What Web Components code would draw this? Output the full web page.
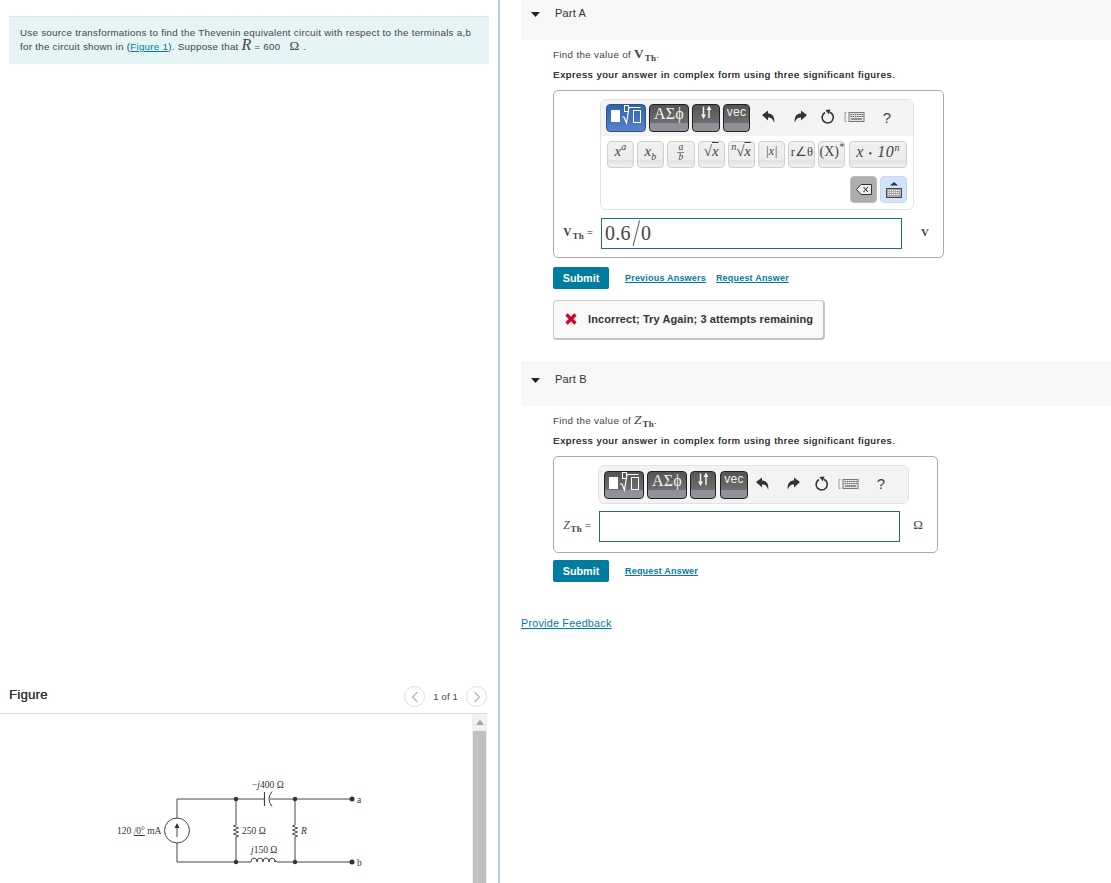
<!DOCTYPE html>
<html lang="en"><head><meta charset="utf-8"><title>Part A</title>
<style>
html,body{margin:0;padding:0;background:#fff}
body{font-family:"Liberation Sans",Arial,sans-serif;color:#333}
</style></head>
<body>
<mp-app></mp-app>
<script>
const SANS='"Liberation Sans",Arial,sans-serif', SERIF='"Liberation Serif","Times New Roman",serif';
function def(name,css,html){
  const C=class extends HTMLElement{
    constructor(){super();const s=this.attachShadow({mode:'open'});
      const h=typeof html==='function'?html(this):html;
      s.innerHTML='<style>'+css+'</style>'+h;}
  };
  customElements.define(name,C);
}
def('mp-math',`:host{display:inline;font-family:${SERIF};color:#444}
 .v{font-size:var(--mv,13.5px);font-weight:var(--mw,400);font-style:var(--ms,normal);letter-spacing:.8px}
 sub{font-size:9px;font-weight:700;font-style:normal;vertical-align:-3px;line-height:0;letter-spacing:.3px;margin-left:0}`,
 el=>`<span class="v"><slot></slot></span><sub>${el.getAttribute('sub')||''}</sub>`);

const ICON={
 undo:`<svg width="16" height="16" viewBox="0 0 16 16"><path d="M1 6 L7 1.500 V4.500 C11 4.500 14 7 13.200 14 C12 10 10.500 8.500 7 8.500 V11.500 Z" fill="#333"/></svg>`,
 redo:`<svg width="16" height="16" viewBox="0 0 16 16"><path d="M15 6 L9 1.500 V4.500 C5 4.500 2 7 2.800 14 C4 10 5.500 8.500 9 8.500 V11.500 Z" fill="#333"/></svg>`,
 reset:`<svg width="16" height="16" viewBox="0 0 16 16"><path d="M9.800 3.200 A5.600 5.600 0 1 1 5 3.500" fill="none" stroke="#333" stroke-width="1.600"/><path d="M10.500 .500 L5.300 1 L8.800 5.200Z" fill="#333"/></svg>`,
 kb:`<svg width="21" height="12" viewBox="0 0 21 12"><path d="M2.500 1.500 H1 V10.500 H2.500" fill="none" stroke="#999"/><rect x="5" y="1.500" width="15" height="9" fill="#e4e4e4" stroke="#777"/><path d="M6.500 3.500 H19 M6.500 5.500 H19" stroke="#666" stroke-dasharray="1.500 .7"/><path d="M7 8 H18" stroke="#444"/></svg>`,
 arrows:`<svg width="20" height="18" viewBox="0 0 20 18" style="display:block"><path d="M7.500 2.500 V13 M13 14 V3.500" stroke="#f2f2f2" stroke-width="1.500" fill="none"/><path d="M5 10.500 L7.500 15 L10 10.500Z M10.500 6 L13 1.500 L15.500 6Z" fill="#f2f2f2"/></svg>`
};
def('mp-tool-dark',`:host{display:flex;box-sizing:border-box;height:100%;border:1px solid #222;border-radius:4px;
  background:linear-gradient(#555 0,#6e6e6e 68%,#8f8f98 70%,#93939c 100%);color:#f2f2f2;
  font-family:${SERIF};font-size:16px;overflow:hidden;align-items:flex-start;justify-content:center}
 :host([active]){background:linear-gradient(#2f66ad 0,#4a76c0 65%,#5b83c8 100%);border-color:#2a5492}
 span{line-height:20px;white-space:nowrap;margin-top:-1px;letter-spacing:.2px}
 :host([sans]) span{font-family:${SANS};font-size:12px;line-height:17px}
 svg{display:block}`,
 `<span><slot></slot></span>`);
def('mp-tool-light',`:host{display:flex;box-sizing:border-box;height:27px;border:1px solid #cfcfcf;border-radius:4px;
  background:linear-gradient(#f0f0f0 0,#ececec 73%,#e2e2e2 74%,#f1f1f1 100%);justify-content:center;
  color:#444;font:italic 15px ${SERIF};overflow:hidden}
 .g{line-height:19px;white-space:nowrap;display:block}
 sup,sub{font-size:10px;line-height:0}
 .f{display:inline-flex;flex-direction:column;align-items:center;font-size:9.500px;line-height:9px;vertical-align:top;padding-top:1px}
 .f i{border-bottom:1px solid #888;padding:0 1px;display:block}
 .f b{font-weight:400;display:block}
 .o{text-decoration:overline;letter-spacing:0}
 .n{font-style:normal}`,
 el=>`<span class="g">${el.getAttribute('html')||''}</span>`);
const TEMPL=`<svg width="38" height="26" viewBox="0 0 38 26" style="display:block"><rect x="4" y="6" width="9" height="12" fill="#fff"/><rect x="17.500" y="1.500" width="4" height="6" fill="none" stroke="#fff"/><path d="M15 13 H17 L19.500 19 L22 3.500 H33.500" fill="none" stroke="#fff" stroke-width="1.200"/><rect x="26.500" y="6.500" width="7" height="12" fill="none" stroke="#fff"/></svg>`;

def('mp-palette',`:host{display:block;box-sizing:border-box;border:1px solid #e2e2e2;border-radius:6px;background:#fff;overflow:hidden;width:var(--pw,314px);margin-left:var(--pl,46px)}
 .top{display:flex;align-items:center;height:var(--th,36px);background:#f3f3f3;padding:0 0 0 5px;box-sizing:border-box}
 .bs{display:flex;height:28px;gap:3px}
 .ic{display:flex;align-items:center;justify-content:center;width:16px;height:16px;margin-top:-2px}
 .kb{width:21px}
 .q{font:15px ${SANS};color:#444;width:10px;text-align:center;margin-top:-2px}
 .rows{padding:5px 6px 0 6px;height:73px;box-sizing:border-box}
 .r{display:flex;gap:3px}
 .r mp-tool-light{width:27px}
 .r .exp{width:58px;margin-left:1px;font-size:16px;letter-spacing:.6px}
 .r2{display:flex;gap:3px;justify-content:flex-end;margin-top:8px;height:28px}
 .bk{width:27px;height:27px;border:1px solid #bdbdbd;box-sizing:border-box;border-radius:4px;background:#adadad;display:flex;align-items:center;justify-content:center}
 .kbd{width:27px;height:27px;border:1px solid #cbd8e6;box-sizing:border-box;border-radius:4px;background:#cfe3fb;display:flex;align-items:center;justify-content:center}`,
 el=>{
  const s=el.hasAttribute('expanded');
  const m=s?[11,15,12,8,17]:[7,14,13,8,17];
  return `<div class="top"><div class="bs">
    <mp-tool-dark ${s?'active':''} style="width:40px;height:28px">${TEMPL}</mp-tool-dark>
    <mp-tool-dark style="width:40px;height:28px">ΑΣϕ</mp-tool-dark>
    <mp-tool-dark style="width:${s?28:26}px;height:28px;${s?'':'margin-right:1px'}">${ICON.arrows}</mp-tool-dark>
    <mp-tool-dark sans style="width:${s?27:28}px;height:28px">vec</mp-tool-dark></div>
   <div class="ic" style="margin-left:${m[0]}px">${ICON.undo}</div>
   <div class="ic" style="margin-left:${m[1]}px">${ICON.redo}</div>
   <div class="ic" style="margin-left:${m[2]}px">${ICON.reset}</div>
   <div class="ic kb" style="margin-left:${m[3]}px">${ICON.kb}</div>
   <div class="q" style="margin-left:${m[4]}px">?</div></div>`+
  (s?`<div class="rows"><div class="r">
    <mp-tool-light html="x<sup>a</sup>"></mp-tool-light>
    <mp-tool-light html="x<sub>b</sub>"></mp-tool-light>
    <mp-tool-light style="width:28px" html="<span class='f'><i>a</i><b>b</b></span>"></mp-tool-light>
    <mp-tool-light html="√<span class='o'>x</span>"></mp-tool-light>
    <mp-tool-light html="<sup>n</sup>√<span class='o'>x</span>"></mp-tool-light>
    <mp-tool-light style="width:28px;font-size:12px" html="|x|"></mp-tool-light>
    <mp-tool-light html="<span class='n' style='font-size:12.500px'>r∠θ</span>"></mp-tool-light>
    <mp-tool-light html="<span class='n' style='font-size:14px'>(X)</span><sup>*</sup>"></mp-tool-light>
    <mp-tool-light class="exp" html="x <span class='n' style='font-size:10px'>•</span> 10<sup>n</sup>"></mp-tool-light>
   </div><div class="r2">
    <div class="bk"><svg width="16" height="11" viewBox="0 0 16 11"><path d="M5 .500 H15.500 V10.500 H5 L.500 5.500Z" fill="#eee" stroke="#333"/><path d="M7.500 3 L12 8 M12 3 L7.500 8" stroke="#222"/></svg></div>
    <div class="kbd"><svg width="16" height="17" viewBox="0 0 16 17"><path d="M8 1 L12 4.500 H4Z" fill="#333"/><rect x=".500" y="7.500" width="15" height="9" fill="#aaa" stroke="#444"/><path d="M2 9.500 H14.500 M2 11.500 H14.500 M2 13.500 H14.500" stroke="#eee" stroke-dasharray="1 1"/></svg></div>
   </div></div>`:'');
 });

def('mp-answer',`:host{display:block;box-sizing:border-box;border:1px solid #aaa;border-radius:5px;width:var(--bw,391px);padding:8px 0 0 0;height:var(--bh,169px);background:#fff}
 .row{display:flex;align-items:center;margin-top:var(--rg,8px)}
 .lab{width:var(--lw,47px);box-sizing:border-box;text-align:right;padding-right:8px;font:11px ${SERIF};color:#333;white-space:nowrap;margin-top:-4px}
 .inp{width:301px;height:31px;box-sizing:border-box;border:1px solid #167288;padding:0 0 0 3px;display:flex;align-items:center;background:#fff}
 .unit{margin-left:var(--um,18px);font:var(--uf,bold 11px) ${SERIF};color:#444;width:10px;text-align:center;margin-top:-4px}`,
 el=>`<slot name="palette"></slot><div class="row"><div class="lab"><slot name="label"></slot></div><div class="inp"><slot name="value"></slot></div><div class="unit">${el.getAttribute('unit')}</div></div>`);

def('mp-submit',`:host{display:inline-block;box-sizing:border-box;width:56px;height:22px;background:#007c9e;border-radius:2px;color:#fff;font:bold 10.800px/22px ${SANS};text-align:center}`,`<slot></slot>`);
def('mp-link',`:host{display:inline-block;color:#007c9e;font:bold 9px ${SANS};text-decoration:underline;letter-spacing:.2px}`,`<slot></slot>`);
def('mp-actions',`:host{display:flex;align-items:center;height:22px}
 .l{display:flex;gap:10px;margin-left:16px;margin-top:-1px}`,`<mp-submit>Submit</mp-submit><div class="l"><slot></slot></div>`);

def('mp-feedback',`:host{display:flex;align-items:center;box-sizing:border-box;width:272px;height:40px;background:#f9f9f9;border:1px solid #ccc;border-bottom:2px solid #c4c4c4;border-right:2px solid #c4c4c4;border-radius:4px;padding:0 0 2px 11px;font:bold 11px ${SANS};color:#333;letter-spacing:.1px}
 svg{margin-right:11px;flex:none}`,`<svg width="12" height="12" viewBox="0 0 12 12"><path d="M1.500 1.500 L10.500 10.500 M10.500 1.500 L1.500 10.500" stroke="#d8002c" stroke-width="3.200"/></svg><slot></slot>`);

def('mp-part-head',`:host{display:flex;align-items:flex-start;box-sizing:border-box;background:#f7f7f7;font:11px ${SANS};color:#333;height:var(--hh,40px);padding:var(--hp,7px) 0 0 10px;letter-spacing:.2px}
 svg{margin:5px 15px 0 0}`,`<svg width="9" height="5" viewBox="0 0 9 5"><path d="M0 0H9L4.500 5Z" fill="#222"/></svg><slot></slot>`);
def('mp-ask',`:host{display:block;margin-left:32px;font:9.800px ${SANS};color:#444;letter-spacing:.33px}
 .a{height:21px;line-height:20px;white-space:nowrap}
 .b{height:20px;line-height:20px;color:#333;letter-spacing:.69px;text-shadow:.2px 0 0 #333;white-space:nowrap}`,
 `<div class="a"><slot name="find"></slot></div><div class="b"><slot name="how"></slot></div>`);

def('mp-intro',`:host{display:block;box-sizing:border-box;width:480px;height:48px;margin:16px 0 0 9px;padding:9px 11px;background:#e5f5f6;border-top:1px solid #dde5ea;font:9.800px/14px ${SANS};color:#444;letter-spacing:.26px}
 a{color:#007c9e;text-decoration:underline}
 .m{font:italic 16px/0 ${SERIF};color:#444;letter-spacing:0}
 .o{font:13px/0 ${SERIF};margin:0 1px 0 3px}`,
 `Use source transformations to find the Thevenin equivalent circuit with respect to the terminals a,b<br>for the circuit shown in (<a>Figure 1</a>). Suppose that <span class="m">R</span> = 600 &nbsp;<span class="o">Ω</span> .`);

def('mp-pager',`:host{display:flex;align-items:center;font:9.500px ${SANS};color:#444}
 .c{width:21px;height:21px;border:1px solid #dedede;border-radius:50%;box-sizing:border-box;display:flex;align-items:center;justify-content:center;background:#fff}
 span{margin:0 8px;letter-spacing:.15px}`,
 `<div class="c"><svg width="8" height="12" viewBox="0 0 8 12"><path d="M6.500 1 L1.500 6 L6.500 11" fill="none" stroke="#bbb" stroke-width="1.400"/></svg></div><span>1 of 1</span><div class="c"><svg width="8" height="12" viewBox="0 0 8 12"><path d="M1.500 1 L6.500 6 L1.500 11" fill="none" stroke="#bbb" stroke-width="1.400"/></svg></div>`);

def('mp-circuit',`:host{display:block;width:462px;height:170px;overflow:hidden;flex:none}
 text{font-family:${SERIF};font-size:9.500px;fill:#333}
 .it{font-style:italic}`,
 `<svg width="462" height="170" viewBox="0 713 462 170" style="display:block">
  <g fill="none" stroke="#444" stroke-width="1">
   <path d="M177 817 V798 H264.500 M270 798 H352"/><path d="M264.500 791 V805" stroke-width="1.200"/><path d="M272 790.500 Q266 798 272 805.500" />
   <path d="M177 842 V861 H251 M277 861 H352"/>
   <circle cx="177" cy="829.500" r="12.500"/>
   <path d="M236 798 V824 l-2.500 1 l5 2 l-5 2 l5 2 l-5 2 l5 2 l-2.500 1 V861"/>
   <path d="M295 798 V824 l-2.500 1 l5 2 l-5 2 l5 2 l-5 2 l5 2 l-2.500 1 V861"/>
   <path d="M251 861 q0 -4 3 -4 t3 4 q0 -4 3 -4 t3 4 q0 -4 3 -4 t3 4 q0 -4 3 -4 t3 4 q0 -3 2 0"/>
   <path d="M177 836 V825"/>
  </g>
  <path d="M177 822 l-2.500 5 h5z" fill="#333"/>
  <g fill="#333"><circle cx="236" cy="798" r="2.200"/><circle cx="295" cy="798" r="2.200"/><circle cx="236" cy="861" r="2.200"/><circle cx="295" cy="861" r="2.200"/><circle cx="352" cy="798" r="2.500"/><circle cx="352" cy="861" r="2.500"/></g>
  <text x="252" y="787">−<tspan class="it">j</tspan>400 Ω</text>
  <text x="117" y="833">120 <tspan text-decoration="underline">/0°</tspan> mA</text>
  <text x="242" y="833">250 Ω</text>
  <text x="301" y="833" class="it">R</text>
  <text x="251" y="852"><tspan class="it">j</tspan>150 Ω</text>
  <text x="357" y="802">a</text><text x="357" y="865">b</text>
 </svg>`);

def('mp-scroll',`:host{display:flex;flex-direction:column;width:15px;height:170px;background:#f1f1f1;flex:none;align-items:center}
 .a{height:17px;display:flex;align-items:center;justify-content:center}
 .th{flex:1;width:13px;background:#c1c1c1}`,
 `<div class="a"><svg width="8" height="5" viewBox="0 0 8 5"><path d="M4 0L8 5H0Z" fill="#a3a3a3"/></svg></div><div class="th"></div>`);

def('mp-figure',`:host{display:block;margin-top:616px}
 .h{display:flex;align-items:center;justify-content:space-between;height:33px;margin-left:9px;width:478px;box-sizing:border-box;color:#333;font:13px ${SANS}}
 .t{text-shadow:.3px 0 0 #333;letter-spacing:.3px;margin-top:-4px}
 .b{display:flex;border-top:1px solid #dcdcdc;width:488px}
 mp-circuit{margin-right:10px}`,
 `<div class="h"><span class="t">Figure</span><mp-pager></mp-pager></div><div class="b"><mp-circuit></mp-circuit><mp-scroll></mp-scroll></div>`);

def('mp-left',`:host{display:block;width:498px;height:883px;overflow:hidden;flex:none;border-right:2px solid #b8cfe2;box-sizing:content-box}`,
 `<mp-intro></mp-intro><mp-figure></mp-figure>`);

def('mp-right',`:host{display:block;flex:1;min-width:0;height:883px;overflow:hidden;padding-left:21px;box-sizing:border-box;font-family:${SANS}}
 .wrap{margin-left:32px}
 mp-ask{margin-top:4px}
 .ans{margin-top:5px}
 .fb{margin-top:11px}
 .pf{display:block;margin-top:35px;color:#007c9e;font:10.800px ${SANS};text-decoration:underline;letter-spacing:.22px}
 .val{display:flex;align-items:center;font:20px ${SERIF};color:#444;letter-spacing:.3px}
 .val svg{margin:0 1px}
 .sm{--mv:11.500px}`,
 `<mp-part-head>Part A</mp-part-head>
 <mp-ask><span slot="find">Find the value of <mp-math sub="Th" style="--mw:700">V</mp-math>.</span><span slot="how">Express your answer in complex form using three significant figures.</span></mp-ask>
 <div class="wrap">
  <mp-answer class="ans" unit="V" style="--bh:168px">
   <mp-palette slot="palette" expanded></mp-palette>
   <span slot="label"><mp-math class="sm" sub="Th" style="--mw:700">V</mp-math> =</span>
   <span slot="value" class="val">0.6<svg width="8" height="27" viewBox="0 0 8 27"><path d="M7 1 V3 L1 26" fill="none" stroke="#555" stroke-width="1"/><path d="M7 1 H8" stroke="#555"/></svg>0</span>
  </mp-answer>
  <mp-actions style="margin-top:9px"><mp-link>Previous Answers</mp-link><mp-link>Request Answer</mp-link></mp-actions>
  <mp-feedback class="fb">Incorrect; Try Again; 3 attempts remaining</mp-feedback>
 </div>
 <mp-part-head style="--hh:45px;--hp:12px;margin-top:21px">Part B</mp-part-head>
 <mp-ask><span slot="find">Find the value of <mp-math sub="Th" style="--ms:italic">Z</mp-math>.</span><span slot="how">Express your answer in complex form using three significant figures.</span></mp-ask>
 <div class="wrap">
  <mp-answer class="ans" unit="Ω" style="--bw:385px;--bh:97px;--rg:7px;--lw:45px;--um:13px;--uf:13px">
   <mp-palette slot="palette" style="--pw:311px;--pl:44px;--th:37px"></mp-palette>
   <span slot="label"><mp-math class="sm" sub="Th" style="--ms:italic">Z</mp-math> =</span>
  </mp-answer>
  <mp-actions style="margin-top:7px"><mp-link>Request Answer</mp-link></mp-actions>
 </div>
 <a class="pf">Provide Feedback</a>`);

def('mp-app',`:host{display:flex;width:1111px;height:883px;overflow:hidden;color:#333}`,`<mp-left></mp-left><mp-right></mp-right>`);
</script>
</body></html>
